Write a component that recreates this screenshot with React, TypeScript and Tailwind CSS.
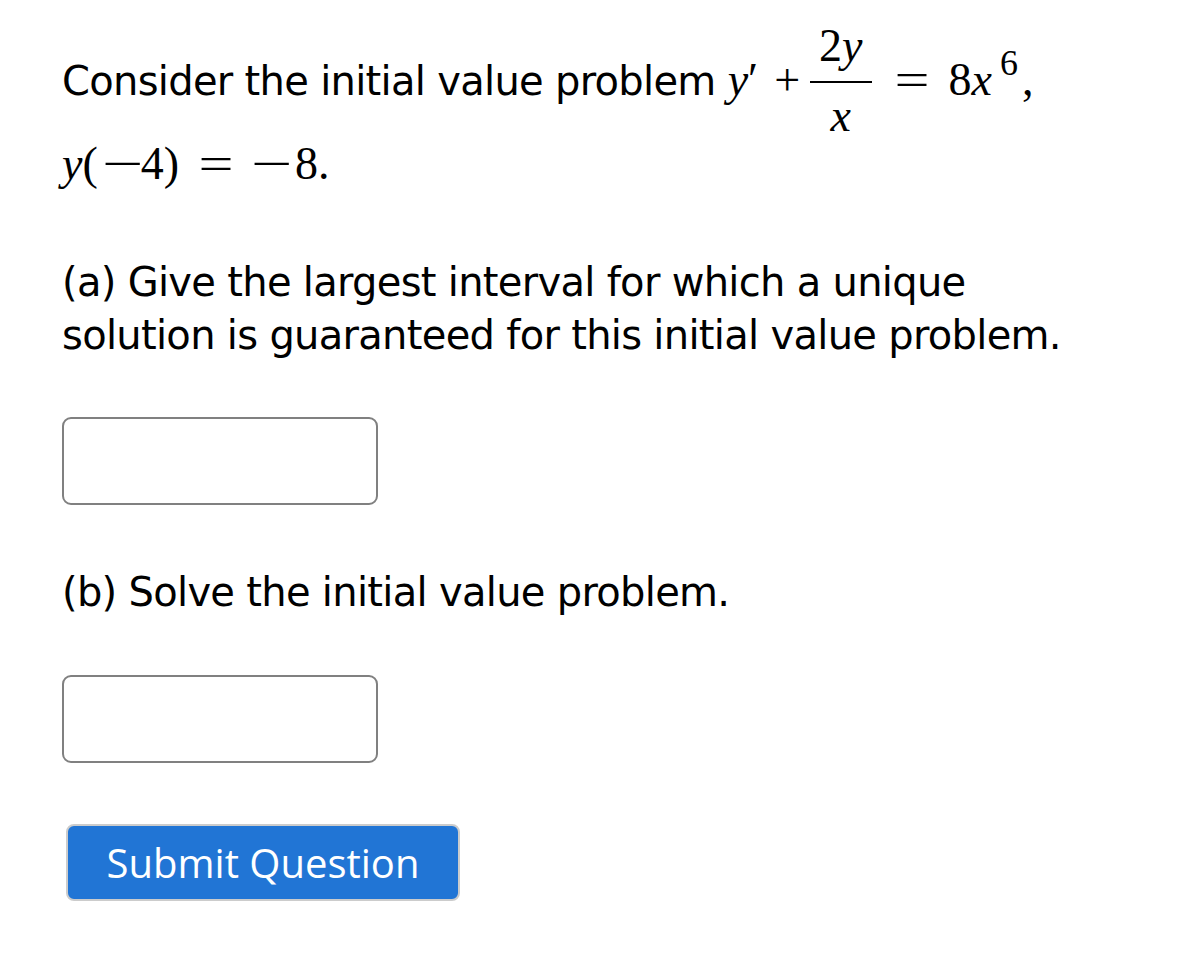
import React from 'react';

const sans = { fontFamily: '"DejaVu Sans", Tahoma, sans-serif' };
const serif = 'font-["Liberation_Serif",serif]';

function Frac({ num, den }: { num: React.ReactNode; den: React.ReactNode }) {
    return (
        <span className="inline-flex flex-col items-center align-middle ml-[10px] relative top-[-3px]">
            <span className="px-[9px] leading-[50px] pb-[10px]">{num}</span>
            <span className="w-full h-[2px] bg-black"></span>
            <span className="px-[9px] leading-[50px] pt-[8px]">{den}</span>
        </span>
    );
}

export default function App() {
    return (
        <div className="min-h-screen bg-white text-black pl-[62px] pt-[24px]" style={sans}>
            {/* Problem statement */}
            <div className="text-[40px] tracking-[-0.7px] leading-[84px]">
                Consider the initial value problem{' '}
                <span className={`${serif} text-[46px] tracking-normal`}>
                    <i>y</i>′<span className="ml-[16px]">+</span>
                    <Frac num={<>2<i>y</i></>} den={<i>x</i>} />
                    <span className="inline-block scale-x-[1.35] ml-[27px] mr-[24px]">=</span>8<i className="mr-[2px]">x</i>
                    <span className="inline-block text-[36px] relative top-[-20px] ml-[6px] leading-none">6</span>
                    <span className="ml-[4px]">,</span>
                </span>
            </div>
            <div className={`${serif} text-[46px] leading-[50px] mt-[-5px]`}>
                <i>y</i>(<span className="inline-block scale-x-[1.6] ml-[12px] mr-[5px]">−</span>4)
                <span className="inline-block scale-x-[1.35] ml-[24px] mr-[30px]">=</span>
                <span className="inline-block scale-x-[1.6] mr-[10px]">−</span>8.
            </div>

            {/* Part (a) */}
            <p className="text-[40px] tracking-[-0.7px] leading-[53px] mt-[67px] w-[1040px]">
                (a) Give the largest interval for which a unique solution is guaranteed for this initial value problem.
            </p>
            <input
                type="text"
                className="block mt-[55px] w-[316px] h-[88px] border-2 border-[#808080] rounded-[9px] outline-none"
            />

            {/* Part (b) */}
            <p className="text-[40px] tracking-[-0.7px] leading-[53px] mt-[61px]">
                (b) Solve the initial value problem.
            </p>
            <input
                type="text"
                className="block mt-[56px] w-[316px] h-[88px] border-2 border-[#808080] rounded-[9px] outline-none"
            />

            <button
                className="block mt-[61px] ml-[4px] w-[394px] h-[77px] bg-[#2175d5] border-2 border-[#cccccc] rounded-[8px] text-white text-[40px]"
                style={{ fontFamily: '"Open Sans", "Noto Sans", sans-serif' }}
            >
                Submit Question
            </button>
        </div>
    );
}
